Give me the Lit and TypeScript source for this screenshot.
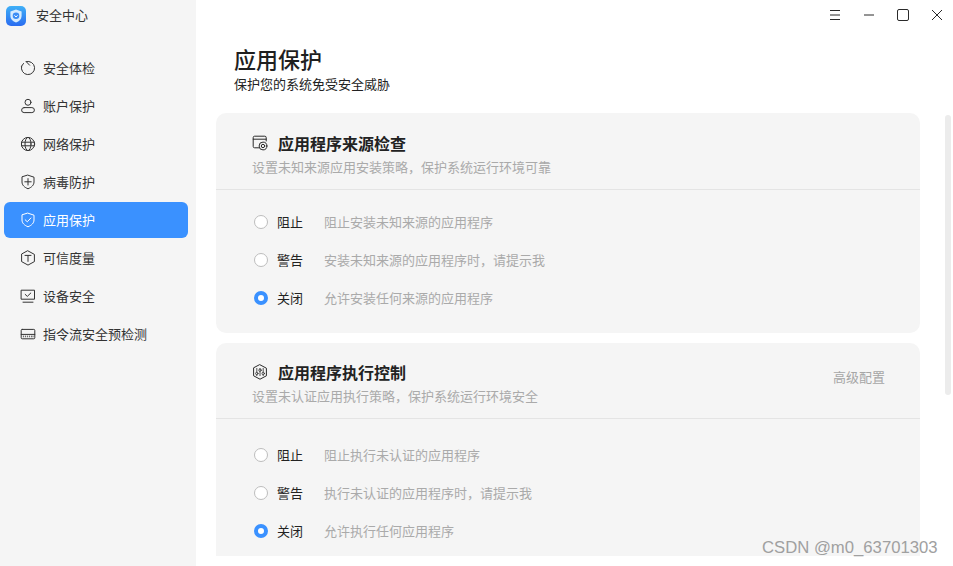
import { LitElement, html, css, svg } from "lit";
import { customElement } from "lit/decorators.js";

const ic = (c: unknown) => html`<svg class="ic" viewBox="0 0 16 16" fill="none" stroke="currentColor" stroke-width="1" stroke-linecap="round" stroke-linejoin="round">${c}</svg>`;
const shield = "M8 1.200 14 3.200V8c0 3.200-2.600 5.400-6 6.800C4.600 13.400 2 11.200 2 8V3.200Z";

const NAV: [string, unknown, boolean?][] = [
  ["安全体检", svg`<path d="M6.200 1.600A6.600 6.600 0 1 1 1.600 6.200"/><path d="M1.600 6.200 3.500 3.500"/><path d="M6.200 1.600 9.600 5.200"/>`],
  ["账户保护", svg`<circle cx="8" cy="4.300" r="3"/><rect x="1.600" y="9.600" width="12.800" height="5" rx="2.500"/>`],
  ["网络保护", svg`<circle cx="8" cy="8" r="6.600"/><ellipse cx="8" cy="8" rx="3" ry="6.600"/><path d="M1.400 6.200h13.200M1.400 9.800h13.200"/>`],
  ["病毒防护", svg`<path d="${shield}"/><path d="M4.800 7.800h6.400M8 4.600v6.400"/>`],
  ["应用保护", svg`<path d="${shield}"/><path d="M5.200 7.800 7.300 9.800 10.900 6"/>`, true],
  ["可信度量", svg`<path d="M8 .9 14.400 4.400V11.600L8 15.100 1.600 11.600V4.400Z"/><path d="M5 5.400h6M8 5.400v6"/>`],
  ["设备安全", svg`<path d="M1.500 2.200h13v9h-13Z"/><path d="M5.200 6.400 7.300 8.400 10.800 5M3 14.200h10"/>`],
  ["指令流安全预检测", svg`<rect x="1.200" y="3.400" width="13.600" height="9.400" rx="1"/><path d="M1.200 8.400h13.600"/><g stroke-width=".8"><path d="M3.400 10.900v-.9M5.400 10.900v-.9M7.400 10.900v-.9M9.400 10.900v-.9M11.400 10.900v-.9M13 10.900v-.9"/></g>`],
];

const CARDS = [
  {
    cls: "first",
    title: "应用程序来源检查",
    desc: "设置未知来源应用安装策略，保护系统运行环境可靠",
    icon: svg`<path d="M6.600 12.800H2.600A1.400 1.400 0 0 1 1.200 11.400V2.600A1.400 1.400 0 0 1 2.600 1.200h10.200a1.400 1.400 0 0 1 1.400 1.400V6"/><path d="M1.200 4.200h13"/><circle cx="11" cy="11" r="3.900"/><circle cx="11" cy="11" r="1.700"/>`,
    action: "",
    opts: [
      ["阻止", "阻止安装未知来源的应用程序", false],
      ["警告", "安装未知来源的应用程序时，请提示我", false],
      ["关闭", "允许安装任何来源的应用程序", true],
    ],
  },
  {
    cls: "second",
    title: "应用程序执行控制",
    desc: "设置未认证应用执行策略，保护系统运行环境安全",
    icon: svg`<path d="M8 .8 14.400 4.200V11.800L8 15.200 1.600 11.800V4.200Z"/><path d="M4.800 4.400V8M4.800 11V11.600M8 7.500V11.600M8 4.400V5M11.200 4.400V8M11.200 11V11.600" stroke-width=".8"/><circle cx="4.800" cy="9.500" r="1.200" stroke-width=".8"/><circle cx="8" cy="6.200" r="1.200" stroke-width=".8"/><circle cx="11.200" cy="9.500" r="1.200" stroke-width=".8"/>`,
    action: "高级配置",
    opts: [
      ["阻止", "阻止执行未认证的应用程序", false],
      ["警告", "执行未认证的应用程序时，请提示我", false],
      ["关闭", "允许执行任何应用程序", true],
    ],
  },
];

@customElement("app-root")
export class AppRoot extends LitElement {
  static styles = css`
    :host {
      display: block;
      width: 953px;
      height: 566px;
      overflow: hidden;
      position: relative;
      background: #fff;
      font-family: "Noto Sans CJK SC", "Noto Sans", sans-serif;
      font-size: 13px;
      line-height: 20px;
      color: #222;
    }
    .app { display: flex; height: 100%; }
    .side { width: 196px; flex: none; background: #f5f5f5; display: flex; flex-direction: column; }
    .brand { display: flex; align-items: center; gap: 10px; height: 32px; padding-left: 6px; font-size: 13px; color: #333; }
    .brand span { margin-top: -2px; }
    .logo { width: 20px; height: 20px; display: block; }
    .nav { display: flex; flex-direction: column; gap: 2px; margin-top: 18px; padding: 0 8px 0 4px; }
    .item { height: 36px; display: flex; align-items: center; gap: 7px; padding-left: 16px; border-radius: 6px; color: #333; }
    .item span { margin-top: -1px; }
    .item.on { background: #3a91ff; color: #fff; }
    .ic { width: 16px; height: 16px; flex: none; display: block; }
    .main { flex: 1; min-width: 0; display: flex; flex-direction: column; height: 556px; }
    .bar { height: 30px; display: flex; justify-content: flex-end; flex: none; margin-right: -1px; }
    .win { width: 34px; height: 30px; display: flex; align-items: center; justify-content: center; color: #2a2a2a; }
    .win svg { width: 12px; height: 12px; display: block; }
    .head { padding: 13px 0 0 38px; height: 83px; box-sizing: border-box; flex: none; }
    .head h1 { margin: 0; font-size: 22px; line-height: 30px; font-weight: 500; color: #1f1f1f; }
    .head p { margin: 1px 0 0; font-size: 13px; line-height: 20px; color: #222; }
    .scroll { flex: 1; overflow: hidden; padding: 0 33px 0 20px; display: flex; flex-direction: column; gap: 10px; }
    .card { background: #f5f5f5; border-radius: 10px; flex: none; }
    .card.first { height: 220px; }
    .card.second { height: 240px; }
    .chead { padding-left: 36px; padding-right: 35px; box-sizing: border-box; border-bottom: 1px solid #e4e4e4; position: relative; }
    .first .chead { height: 77px; padding-top: 20px; }
    .second .chead { height: 76px; padding-top: 19px; }
    .ctitle { display: flex; align-items: center; gap: 10px; height: 22px; font-size: 16px; font-weight: 700; color: #222; }
    .ctitle .ic { color: #2a2a2a; margin-top: -2px; }
    .ctitle span { margin-top: -3px; }
    .cdesc { font-size: 13px; line-height: 20px; margin-top: 2px; color: #aaa; }
    .act { position: absolute; right: 35px; top: 24px; color: #a6a6a6; font-size: 13px; line-height: 20px; }
    .opts { display: flex; flex-direction: column; gap: 10px; }
    .first .opts { padding-top: 18px; }
    .second .opts { padding-top: 22px; }
    .opt { height: 28px; display: flex; align-items: center; padding-left: 38px; }
    .radio { width: 14px; height: 14px; box-sizing: border-box; border-radius: 50%; border: 1px solid #bdbdbd; background: #fff; flex: none; margin-right: 9px; }
    .radio.on { border: 4px solid #3a91ff; }
    .lab { width: 47px; color: #222; flex: none; margin-top: -1px; }
    .txt { color: #aaa; margin-top: -1px; }
    .thumb { position: absolute; left: 945px; top: 115px; width: 6px; height: 280px; border-radius: 3px; background: #ececec; }
    .mark { position: absolute; left: 762px; top: 538px; font-family: "Liberation Sans", sans-serif; font-size: 16.7px; line-height: 20px; color: #a0a0a0; white-space: nowrap; }
  `;

  render() {
    return html`<div class="app">
      <aside class="side">
        <div class="brand">
          <svg class="logo" viewBox="0 0 20 20">
            <defs><linearGradient id="g" x1="0" y1="0" x2="0" y2="1"><stop offset="0" stop-color="#3fb0f7"/><stop offset="1" stop-color="#2a6cf0"/></linearGradient></defs>
            <rect width="20" height="20" rx="5" fill="url(#g)"/>
            <path d="M10 3.400 15.600 5.400V10c0 3.200-2.400 5.200-5.600 6.600C6.800 15.200 4.400 13.200 4.400 10V5.400Z" fill="#d6ecff"/>
            <circle cx="10" cy="9.800" r="3.300" fill="#3b8df5"/>
            <path d="M8.400 9.400 10 10.900 11.600 9.400" fill="none" stroke="#fff" stroke-width="1"/>
          </svg>
          <span>安全中心</span>
        </div>
        <nav class="nav">
          ${NAV.map(([t, i, on]) => html`<div class="item ${on ? "on" : ""}">${ic(i)}<span>${t}</span></div>`)}
        </nav>
      </aside>
      <main class="main">
        <div class="bar">
          <div class="win"><svg viewBox="0 0 12 12" fill="none" stroke="currentColor" stroke-width="1"><path d="M1 1.500h10M1 6h10M1 10.500h10"/></svg></div>
          <div class="win"><svg viewBox="0 0 12 12" fill="none" stroke="currentColor" stroke-width="1"><path d="M1 6h10"/></svg></div>
          <div class="win"><svg viewBox="0 0 12 12" fill="none" stroke="currentColor" stroke-width="1"><rect x=".5" y=".5" width="11" height="11" rx="1.500"/></svg></div>
          <div class="win"><svg viewBox="0 0 12 12" fill="none" stroke="currentColor" stroke-width="1"><path d="M1 1l10 10M11 1 1 11"/></svg></div>
        </div>
        <header class="head"><h1>应用保护</h1><p>保护您的系统免受安全威胁</p></header>
        <div class="scroll">
          ${CARDS.map((c) => html`<section class="card ${c.cls}">
            <div class="chead">
              <div class="ctitle">${ic(c.icon)}<span>${c.title}</span></div>
              <div class="cdesc">${c.desc}</div>
              ${c.action ? html`<div class="act">${c.action}</div>` : ""}
            </div>
            <div class="opts">
              ${c.opts.map((o) => html`<div class="opt"><span class="radio ${o[2] ? "on" : ""}"></span><span class="lab">${o[0]}</span><span class="txt">${o[1]}</span></div>`)}
            </div>
          </section>`)}
        </div>
      </main>
    </div>
    <div class="thumb"></div>
    <div class="mark">CSDN @m0_63701303</div>`;
  }
}
